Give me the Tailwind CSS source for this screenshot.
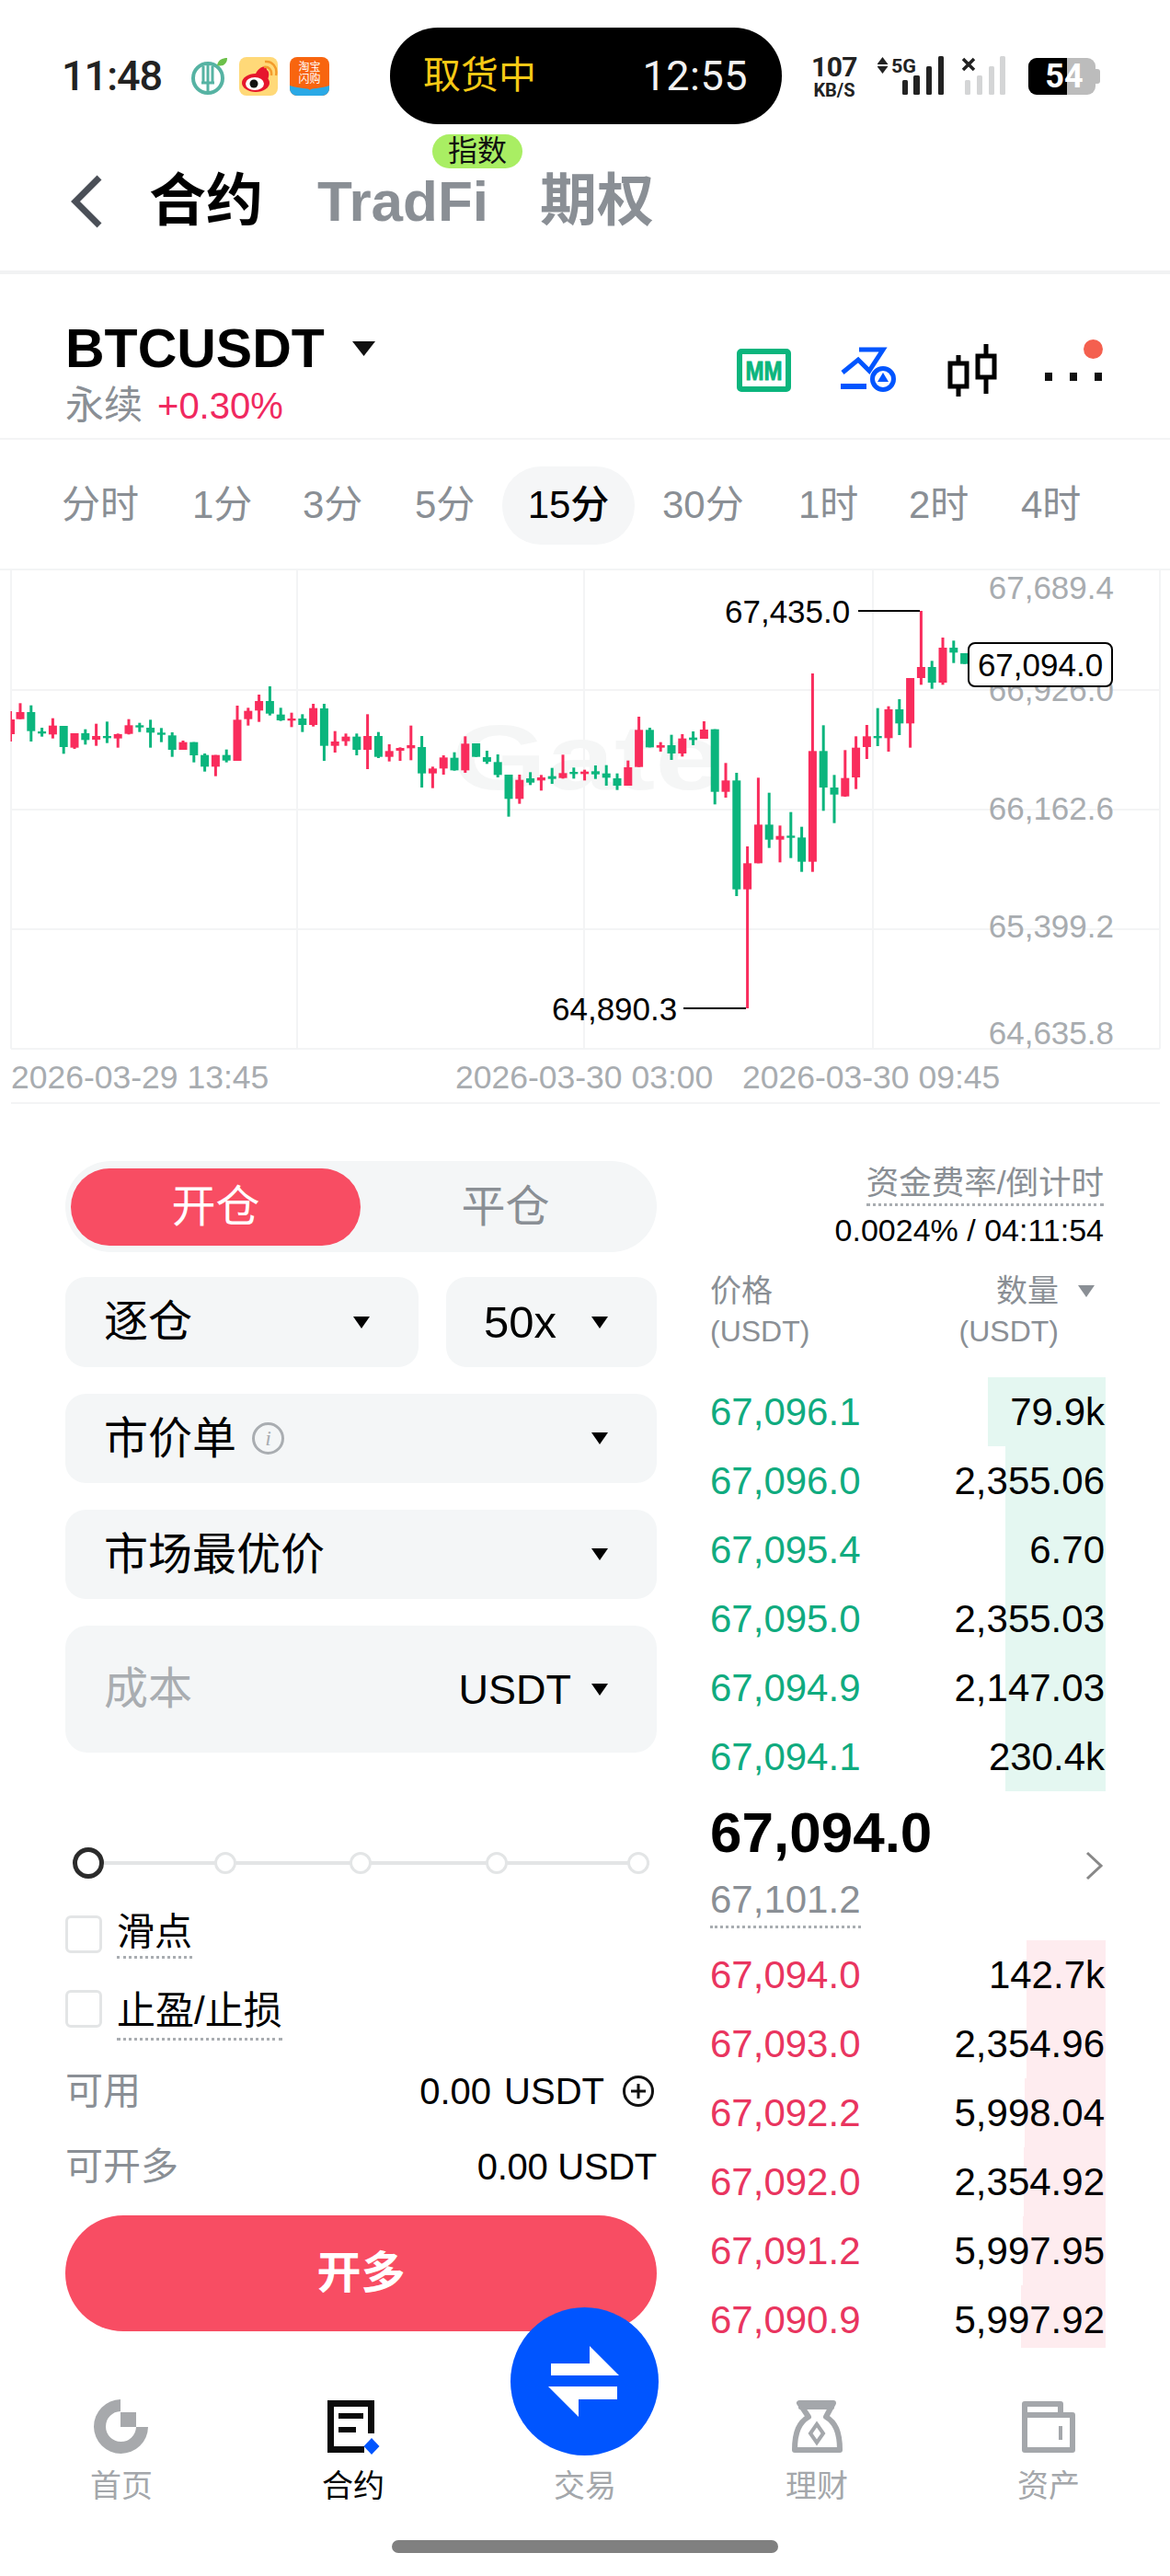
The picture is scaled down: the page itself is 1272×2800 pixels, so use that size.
<!doctype html>
<html lang="zh">
<head>
<meta charset="UTF-8" />
<meta name="viewport" content="width=device-width, initial-scale=1.0" />
<title>BTCUSDT</title>
<script src="https://cdn.jsdelivr.net/npm/@tailwindcss/browser@4"></script>
</head>
<body class="bg-white">
<div class="relative w-[1272px] h-[2800px] overflow-hidden bg-white text-black font-['Liberation_Sans','Noto_Sans_CJK_SC',sans-serif]">

	<!-- status bar -->
	<div class="flex items-center h-[105px] mt-[30px] box-border">
		<span class="ml-[67px] w-[111px] text-[45px] font-medium leading-none text-[#222] font-['Roboto',sans-serif] tracking-[-1px]">11:48</span>
		<svg class="ml-[30px] w-[40px] h-[42px]" viewBox="0 0 40 42"><circle cx="18" cy="23" r="16" fill="none" stroke="#56b3a3" stroke-width="4"/><path d="M13 10V28M23 10V28M18 7V38M11 28H25" fill="none" stroke="#56b3a3" stroke-width="3"/><path d="M28 9C29 3 34 1 39 1C39 7 35 11 28 9Z" fill="#6cc04a"/></svg>
		<svg class="ml-[12px] w-[42px] h-[42px]" viewBox="0 0 42 42"><rect width="42" height="42" rx="8" fill="#ffd978"/><ellipse cx="18" cy="28" rx="15" ry="10" fill="#e6162d"/><path d="M18 18C22 10 30 8 30 14C34 16 32 24 30 26Z" fill="#e6162d"/><ellipse cx="17" cy="29" rx="10" ry="7" fill="#fff"/><circle cx="16" cy="29" r="4.5" fill="#111"/><path d="M27 11C32 10 36 14 35 20M28 5C36 4 42 11 40 20" fill="none" stroke="#f39c2d" stroke-width="2.5"/></svg>
		<svg class="ml-[13px] w-[43px] h-[42px]" viewBox="0 0 43 42"><rect width="43" height="42" rx="8" fill="#f8650f"/><path d="M0 31C12 35 20 33 22 36C24 33 32 35 43 31V34C43 38 40 42 35 42H8C3 42 0 38 0 34Z" fill="#2aa9e6"/><text x="21.5" y="15" text-anchor="middle" font-size="12" fill="#fff">淘宝</text><text x="21.5" y="28" text-anchor="middle" font-size="12" fill="#fff">闪购</text></svg>
		<div class="ml-[66px] w-[426px] h-[105px] rounded-[52px] bg-black flex items-center justify-between pl-[36px] pr-[37px]">
			<span class="text-[41px] leading-none text-[#f6c915]">取货中</span>
			<span class="text-[45px] leading-none text-[#f2f2f2] font-['Roboto',sans-serif] tracking-[0.5px]">12:55</span>
		</div>
		<div class="ml-[31px] w-[52px] flex flex-col items-center text-[#222] font-bold">
			<span class="text-[30px] leading-[30px] tracking-[-0.5px] font-['Roboto',sans-serif] h-[30px]">107</span>
			<span class="text-[20px] leading-[20px] font-['Roboto',sans-serif] h-[20px]">KB/S</span>
		</div>
		<svg class="ml-[21px] w-[148px] h-[46px] " viewBox="956 60 148 46">
			<path d="M961 62L967 70H955ZM961 80L967 72H955Z" fill="#222" transform="translate(0.5 0) scale(1)"/>
			<text x="971" y="79" font-size="20" font-weight="700" fill="#222" textLength="27" lengthAdjust="spacingAndGlyphs" font-family="Roboto">5G</text>
			<g fill="#222"><rect x="983" y="87" width="6" height="16" rx="1.5"/><rect x="995" y="82" width="7" height="21" rx="1.5"/><rect x="1009" y="72" width="6" height="31" rx="1.5"/><rect x="1022" y="61" width="6" height="42" rx="1.5"/></g>
			<path d="M1049 64L1061 76M1061 64L1049 76" stroke="#222" stroke-width="3.5"/>
			<g fill="#d4d5d6"><rect x="1051" y="87" width="6" height="16" rx="1.5"/><rect x="1064" y="82" width="6" height="21" rx="1.5"/><rect x="1077" y="72" width="6" height="31" rx="1.5"/><rect x="1089" y="61" width="6" height="42" rx="1.5"/></g>
		</svg>
		<div class="relative ml-[16px] w-[73px] h-[40px] rounded-[9px] overflow-hidden bg-[#bcbcbc] flex items-center justify-center">
			<div class="absolute left-0 top-0 bottom-0 w-[42px] bg-black"></div>
			<span class="relative text-[36px] font-bold leading-none text-white font-['Roboto',sans-serif] ml-[5px]">54</span>
		</div>
		<div class="w-[5px] h-[16px] rounded-r-[3px] bg-[#bcbcbc]"></div>
	</div>

	<!-- top nav -->
	<div class="relative flex items-center h-[159px] pt-[9px] box-border">
		<svg class="ml-[74px] w-[42px] h-[60px]" viewBox="0 0 42 60"><path d="M34 4L8 30L34 56" fill="none" stroke="#4a4f57" stroke-width="7"/></svg>
		<span class="ml-[46px] text-[62px] font-bold leading-none">合约</span>
		<span class="ml-[59px] text-[62px] font-bold leading-none text-[#8a8f95]">TradFi</span>
		<span class="ml-[56px] text-[62px] font-bold leading-none text-[#8a8f95]">期权</span>
		<span class="absolute left-[470px] top-[11px] w-[98px] h-[37px] rounded-[19px] bg-[#a9ee63] text-[32px] leading-[37px] text-center text-[#111]">指数</span>
	</div>
	<div class="h-[4px] bg-[#f1f2f3]"></div>

	<!-- symbol row -->
	<div class="relative h-[178px] pl-[71px] pt-[52px] box-border">
		<div class="flex items-center h-[58px]">
			<span class="text-[59px] font-bold leading-none">BTCUSDT</span>
			<svg class="ml-[30px] w-[25px] h-[16px]" viewBox="0 0 25 16"><path d="M0 0H25L12.5 16Z" fill="#111"/></svg>
		</div>
		<div class="flex items-center mt-[11px] h-[44px]">
			<span class="text-[42px] leading-none text-[#8a8f95]">永续</span>
			<span class="ml-[16px] text-[40px] leading-none text-[#f0295f]">+0.30%</span>
		</div>
		<div class="absolute left-[801px] top-[81px] flex items-start">
			<svg class="w-[59px] h-[47px]" viewBox="0 0 59 47"><rect x="3" y="3" width="53" height="41" rx="2" fill="none" stroke="#0bb57d" stroke-width="6"/><text x="29.5" y="34" text-anchor="middle" font-size="30" font-weight="700" fill="#0bb57d" stroke="#0bb57d" stroke-width="1" textLength="40" lengthAdjust="spacingAndGlyphs">MM</text></svg>
			<svg class="ml-[54px] -mt-[2px] w-[60px] h-[50px]" viewBox="914 383 60 50"><path d="M916 411L933 397L945 409L960 386H934" fill="none" stroke="#0055ff" stroke-width="5"/><rect x="914" y="423" width="28" height="6" fill="#0055ff"/><circle cx="960" cy="418" r="11.5" fill="none" stroke="#0055ff" stroke-width="5"/><path d="M960 411L966 421H954Z" fill="#0055ff"/></svg>
			<svg class="ml-[55px] -mt-[5px] w-[56px] h-[58px]" viewBox="1028 379 56 58"><path d="M1041 391V436M1071 379V433" stroke="#000" stroke-width="5"/><rect x="1032" y="400" width="18" height="25" fill="#fff" stroke="#000" stroke-width="5"/><rect x="1062" y="392" width="18" height="23" fill="#fff" stroke="#000" stroke-width="5"/></svg>
		</div>
		<div class="absolute left-[1136px] top-[107px] flex gap-[19px]">
			<div class="w-[8px] h-[9px] bg-[#111]"></div><div class="w-[8px] h-[9px] bg-[#111]"></div><div class="w-[8px] h-[9px] bg-[#111]"></div>
		</div>
		<div class="absolute left-[1178px] top-[71px] w-[21px] h-[21px] rounded-full bg-[#f4604f]"></div>
	</div>
	<div class="h-[2px] bg-[#f3f4f5]"></div>

	<!-- intervals -->
	<div class="relative h-[140px] pt-[2px] box-border flex items-center text-[42px] leading-none text-[#8a8f95]">
		<span class="ml-[67px] w-[142px]">分时</span>
		<span class="w-[120px]">1分</span>
		<span class="w-[122px]">3分</span>
		<span class="w-[95px]">5分</span>
		<span class="w-[144px] h-[85px] rounded-[42px] bg-[#f5f6f7] text-black flex items-center justify-center font-medium">15分</span>
		<span class="ml-[30px] w-[148px]">30分</span>
		<span class="w-[120px]">1时</span>
		<span class="w-[122px]">2时</span>
		<span>4时</span>
	</div>
	<div class="h-[2px] bg-[#f3f4f5]"></div>

	<!-- kline chart, free canvas in page coords minus 620 -->
	<svg id="chart" class="block w-[1272px] h-[580px]" viewBox="0 0 1272 580">
		<g stroke="#f3f4f5" stroke-width="2">
			<path d="M12 0V520M323 0V520M635 0V520M949 0V520M1261 0V520"/>
			<path d="M12 130H1261M12 260H1261M12 390H1261M12 520H1261"/>
			<path d="M12 579H1261"/>
		</g>
		<text x="491" y="238" font-size="100" font-weight="700" fill="#f5f6f6" textLength="295" lengthAdjust="spacingAndGlyphs" font-family="Liberation Sans">Gate</text>
		<g id="candles"></g>
		<g text-anchor="end" font-size="35" fill="#a8acb0">
			<text x="1211" y="31">67,689.4</text>
			<text x="1211" y="142">66,926.0</text>
			<text x="1211" y="271">66,162.6</text>
			<text x="1211" y="399">65,399.2</text>
			<text x="1211" y="515">64,635.8</text>
		</g>
		<g font-size="35.5" fill="#a8acb0">
			<text x="12" y="563">2026-03-29 13:45</text>
			<text x="495" y="563">2026-03-30 03:00</text>
			<text x="807" y="563">2026-03-30 09:45</text>
		</g>
		<path d="M933 44H1000M743 476H811" stroke="#000" stroke-width="2" fill="none"/>
		<text x="788" y="57" font-size="35" fill="#000">67,435.0</text>
		<text x="600" y="489" font-size="35" fill="#000">64,890.3</text>
		<rect x="1053" y="79" width="156" height="47" rx="7" fill="#fff" stroke="#000" stroke-width="2"/>
		<text x="1131" y="115" text-anchor="middle" font-size="35" fill="#000">67,094.0</text>
	</svg>

	<!-- order form and book -->
	<div class="flex h-[1405px]">
		<div class="ml-[71px] w-[643px] pt-[62px] box-border">
			<div class="flex items-center h-[99px] rounded-[50px] bg-[#f4f6f7] pl-[6px] text-[48px] leading-none">
				<div class="w-[315px] h-[84px] rounded-[42px] bg-[#f84d63] text-white flex items-center justify-center">开仓</div>
				<div class="w-[315px] text-center text-[#8a8f95]">平仓</div>
			</div>
			<div class="flex gap-[30px] mt-[27px] text-[48px] leading-none">
				<div class="w-[384px] h-[98px] rounded-[22px] bg-[#f4f6f7] flex items-center justify-between pl-[42px] pr-[53px]">
					<span>逐仓</span>
					<svg class="w-[18px] h-[13px]" viewBox="0 0 18 13"><path d="M0 0H18L9 13Z"/></svg>
				</div>
				<div class="w-[229px] h-[98px] rounded-[22px] bg-[#f4f6f7] flex items-center justify-between pl-[41px] pr-[53px]">
					<span class="text-[49px]">50x</span>
					<svg class="w-[18px] h-[13px]" viewBox="0 0 18 13"><path d="M0 0H18L9 13Z"/></svg>
				</div>
			</div>
			<div class="flex items-center justify-between h-[97px] mt-[29px] rounded-[22px] bg-[#f4f6f7] pl-[42px] pr-[53px] text-[48px] leading-none">
				<div class="flex items-center">
					<span>市价单</span>
					<span class="ml-[17px] w-[35px] h-[35px] rounded-full border-[3px] border-[#a9adb1] text-[#a9adb1] text-[24px] italic leading-[29px] text-center font-['Liberation_Serif',serif]">i</span>
				</div>
				<svg class="w-[18px] h-[13px]" viewBox="0 0 18 13"><path d="M0 0H18L9 13Z"/></svg>
			</div>
			<div class="flex items-center justify-between h-[97px] mt-[29px] rounded-[22px] bg-[#f4f6f7] pl-[42px] pr-[53px] text-[48px] leading-none">
				<span>市场最优价</span>
				<svg class="w-[18px] h-[13px]" viewBox="0 0 18 13"><path d="M0 0H18L9 13Z"/></svg>
			</div>
			<div class="flex items-center justify-between h-[138px] mt-[29px] rounded-[24px] bg-[#f4f6f7] pl-[42px] pr-[53px] text-[48px] leading-none">
				<span class="text-[#a9adb1]">成本</span>
				<div class="flex items-center gap-[22px]">
					<span class="text-[45px]">USDT</span>
					<svg class="w-[18px] h-[13px]" viewBox="0 0 18 13"><path d="M0 0H18L9 13Z"/></svg>
				</div>
			</div>

			<div class="relative flex items-center h-[34px] mt-[103px] ml-[8px] w-[627px]">
				<div class="absolute left-0 right-0 h-[4px] bg-[#e3e5e6]"></div>
				<div class="relative w-[34px] h-[34px] rounded-full border-[5px] border-[#2b2b2b] bg-white"></div>
				<div class="relative ml-[120px] w-[24px] h-[24px] rounded-full border-[3px] border-[#e3e5e6] bg-white"></div>
				<div class="relative ml-[123px] w-[24px] h-[24px] rounded-full border-[3px] border-[#e3e5e6] bg-white"></div>
				<div class="relative ml-[124px] w-[24px] h-[24px] rounded-full border-[3px] border-[#e3e5e6] bg-white"></div>
				<div class="relative ml-[130px] w-[24px] h-[24px] rounded-full border-[3px] border-[#e3e5e6] bg-white"></div>
			</div>

			<div class="flex items-start gap-[16px] mt-[36px] text-[41px] leading-[44px]">
				<div class="w-[40px] h-[41px] mt-[4px] rounded-[6px] border-[3px] border-[#e3e5e6]"></div>
				<span class="pb-[4px] border-b-[3px] border-dotted border-[#a9adb1]">滑点</span>
			</div>
			<div class="flex items-start gap-[16px] mt-[34px] text-[42px] leading-[46px]">
				<div class="w-[40px] h-[41px] rounded-[6px] border-[3px] border-[#e3e5e6]"></div>
				<span class="pb-[6px] border-b-[3px] border-dotted border-[#a9adb1]">止盈/止损</span>
			</div>
			<div class="flex items-center justify-between mt-[33px] h-[44px] text-[40px] leading-none">
				<span class="text-[41px] text-[#8a8f95]">可用</span>
				<div class="flex items-center mr-[3px]">
					<span>0.00</span>
					<span class="ml-[14px]">USDT</span>
					<svg class="ml-[20px] w-[34px] h-[34px]" viewBox="0 0 34 34"><circle cx="17" cy="17" r="15.5" fill="none" stroke="#111" stroke-width="3"/><path d="M17 9V25M9 17H25" stroke="#111" stroke-width="3"/></svg>
				</div>
			</div>
			<div class="flex items-center justify-between mt-[38px] h-[44px] text-[40px] leading-none">
				<span class="text-[41px] text-[#8a8f95]">可开多</span>
				<span class="tracking-[-0.3px]">0.00 USDT</span>
			</div>
			<div class="flex items-center justify-center h-[126px] mt-[31px] rounded-[63px] bg-[#f84d63] text-white text-[48px] font-bold leading-none">开多</div>
		</div>

		<div class="ml-[58px] w-[430px] pt-[64px] box-border">
			<div class="flex flex-col items-end pr-[2px]">
				<span class="text-[35.5px] leading-[44px] text-[#8a8f95] border-b-[3px] border-dotted border-[#a9adb1]">资金费率/倒计时</span>
				<span class="mt-[6px] text-[34px] leading-[40px]">0.0024% / 04:11:54</span>
			</div>
			<div class="flex justify-between mt-[26px] text-[#8a8f95]">
				<div class="flex flex-col">
					<span class="text-[34px] leading-[40px]">价格</span>
					<span class="mt-[4px] text-[32px] leading-[40px]">(USDT)</span>
				</div>
				<div class="flex flex-col items-end">
					<div class="flex items-center h-[40px] pr-[12px]">
						<span class="text-[34px] leading-[40px]">数量</span>
						<svg class="ml-[21px] w-[18px] h-[13px]" viewBox="0 0 18 13"><path d="M0 0H18L9 13Z" fill="#8a8f95"/></svg>
					</div>
					<span class="mt-[4px] pr-[51px] text-[32px] leading-[40px]">(USDT)</span>
				</div>
			</div>

			<div class="mt-[30px] text-[42px] leading-none">
				<div class="relative flex items-center justify-between h-[75px]"><div class="absolute right-0 top-0 bottom-0 w-[128px] bg-[#e4f7f1]"></div><span class="relative text-[#10ab7f]">67,096.1</span><span class="relative pr-[1px]">79.9k</span></div>
				<div class="relative flex items-center justify-between h-[75px]"><div class="absolute right-0 top-0 bottom-0 w-[109px] bg-[#e4f7f1]"></div><span class="relative text-[#10ab7f]">67,096.0</span><span class="relative pr-[1px]">2,355.06</span></div>
				<div class="relative flex items-center justify-between h-[75px]"><div class="absolute right-0 top-0 bottom-0 w-[109px] bg-[#e4f7f1]"></div><span class="relative text-[#10ab7f]">67,095.4</span><span class="relative pr-[1px]">6.70</span></div>
				<div class="relative flex items-center justify-between h-[75px]"><div class="absolute right-0 top-0 bottom-0 w-[109px] bg-[#e4f7f1]"></div><span class="relative text-[#10ab7f]">67,095.0</span><span class="relative pr-[1px]">2,355.03</span></div>
				<div class="relative flex items-center justify-between h-[75px]"><div class="absolute right-0 top-0 bottom-0 w-[109px] bg-[#e4f7f1]"></div><span class="relative text-[#10ab7f]">67,094.9</span><span class="relative pr-[1px]">2,147.03</span></div>
				<div class="relative flex items-center justify-between h-[75px]"><div class="absolute right-0 top-0 bottom-0 w-[109px] bg-[#e4f7f1]"></div><span class="relative text-[#10ab7f]">67,094.1</span><span class="relative pr-[1px]">230.4k</span></div>
			</div>

			<div class="relative h-[162px]">
				<div class="pt-[14px] text-[62px] font-bold leading-[62px]">67,094.0</div>
				<div class="inline-block mt-[20px] pb-[6px] text-[42px] leading-[44px] text-[#8a8f95] border-b-[3px] border-dotted border-[#a9adb1]">67,101.2</div>
				<svg class="absolute left-[408px] top-[65px] w-[20px] h-[32px]" viewBox="0 0 20 32"><path d="M2 2L17 16L2 30" fill="none" stroke="#888" stroke-width="3"/></svg>
			</div>

			<div class="text-[42px] leading-none">
				<div class="relative flex items-center justify-between h-[75px]"><div class="absolute right-0 top-0 bottom-0 w-[86px] bg-[#feecef]"></div><span class="relative text-[#e9355f]">67,094.0</span><span class="relative pr-[1px]">142.7k</span></div>
				<div class="relative flex items-center justify-between h-[75px]"><div class="absolute right-0 top-0 bottom-0 w-[86px] bg-[#feecef]"></div><span class="relative text-[#e9355f]">67,093.0</span><span class="relative pr-[1px]">2,354.96</span></div>
				<div class="relative flex items-center justify-between h-[75px]"><div class="absolute right-0 top-0 bottom-0 w-[88px] bg-[#feecef]"></div><span class="relative text-[#e9355f]">67,092.2</span><span class="relative pr-[1px]">5,998.04</span></div>
				<div class="relative flex items-center justify-between h-[75px]"><div class="absolute right-0 top-0 bottom-0 w-[89px] bg-[#feecef]"></div><span class="relative text-[#e9355f]">67,092.0</span><span class="relative pr-[1px]">2,354.92</span></div>
				<div class="relative flex items-center justify-between h-[75px]"><div class="absolute right-0 top-0 bottom-0 w-[90px] bg-[#feecef]"></div><span class="relative text-[#e9355f]">67,091.2</span><span class="relative pr-[1px]">5,997.95</span></div>
				<div class="relative flex items-center justify-between h-[75px]"><div class="absolute right-0 top-0 bottom-[7px] w-[92px] bg-[#feecef]"></div><span class="relative text-[#e9355f]">67,090.9</span><span class="relative pr-[1px]">5,997.92</span></div>
			</div>
		</div>
	</div>

	<!-- bottom tabs -->
	<div class="grid grid-cols-[252px_252px_252px_252px_252px] pl-[6px] text-[34px] leading-[40px] text-[#a4a7ab]">
		<div class="flex flex-col items-center">
			<svg class="w-[64px] h-[64px]" viewBox="0 0 64 64"><path d="M61 33A29.5 29.5 0 1 1 31 3V16A16.5 16.5 0 1 0 48 33Z" fill="#a7a9ac"/><rect x="31" y="17" width="17" height="16" fill="#a7a9ac"/></svg>
			<span class="mt-[13px]">首页</span>
		</div>
		<div class="flex flex-col items-center text-black">
			<svg class="w-[64px] h-[64px]" viewBox="0 0 64 64"><path d="M51.5 40V7.5H7.5V57.5H44" fill="none" stroke="#0b0b0b" stroke-width="7"/><rect x="16" y="18" width="27" height="6" fill="#0b0b0b"/><rect x="16" y="33" width="19" height="6" fill="#0b0b0b"/><path d="M52 45L60.5 54L52 63L43.5 54Z" fill="#0055ff"/></svg>
			<span class="mt-[13px]">合约</span>
		</div>
		<div class="flex flex-col items-center">
			<div class="w-[64px] h-[64px]"></div>
			<span class="mt-[13px]">交易</span>
		</div>
		<div class="flex flex-col items-center">
			<svg class="w-[64px] h-[64px]" viewBox="0 0 64 64"><path d="M13 7H50L42 22C52 28 57 38 57 58H8C8 38 13 28 23 22Z" fill="none" stroke="#a4a7ab" stroke-width="6" stroke-linejoin="round"/><rect x="12" y="4" width="39" height="10" rx="2" fill="#a4a7ab"/><path d="M32 30L39 40L32 50L25 40Z" fill="none" stroke="#a4a7ab" stroke-width="4"/></svg>
			<span class="mt-[13px]">理财</span>
		</div>
		<div class="flex flex-col items-center">
			<svg class="w-[64px] h-[64px]" viewBox="0 0 64 64"><path d="M6 20V8H45V20M6 20H58V58H6Z" fill="none" stroke="#a4a7ab" stroke-width="6" stroke-linejoin="round"/><path d="M45 32V47" stroke="#a4a7ab" stroke-width="4"/></svg>
			<span class="mt-[13px]">资产</span>
		</div>
	</div>
	<div class="w-[420px] h-[14px] mx-auto mt-[39px] rounded-[7px] bg-[#808080]"></div>

	<!-- floating trade button -->
	<div class="absolute left-[555px] top-[2508px] w-[161px] h-[161px] rounded-full bg-[#0055ff] flex items-center justify-center">
		<svg class="w-[80px] h-[80px]" viewBox="596 550 80 80"><path d="M599 570H641V551L673 583H599ZM596 595H671V609H629V628Z" fill="#fff"/></svg>
	</div>
</div>

<script>
	// [wickTop, bodyTop, bodyBottom, wickBottom, up?] read off the reference, in chart coords
	const firstPart = [
		[253,282,305,305,1],[260,282,344,378,0],[333,345,352,362,0],[302,326,355,368,1],[327,327,396,418,0],
		[351,351,398,402,1],[338,351,373,388,0],[320,360,372,392,1],[313,360,367,383,0],[352,354,368,398,1],
		[305,325,353,355,1],[317,325,332,347,0],[307,333,349,398,0],[334,349,356,380,0],[348,358,405,428,0],
		[375,380,405,405,1],[380,380,423,446,0],[417,422,460,476,0],[422,422,460,491,1],[404,422,440,446,0],
		[261,307,441,441,1],[268,278,305,326,1],[225,246,277,314,1],[198,246,287,293,0],[268,290,309,311,0],
		[284,303,310,331,1],[289,303,324,347,0],[255,269,324,329,1],[255,270,392,441,0],[344,378,392,414,1],
		[352,362,377,392,1],[352,362,405,423,0],[289,360,405,468,1],[347,360,428,432,0],[387,409,428,443,1],
		[397,399,408,441,1],[326,390,400,439,1],[360,396,482,528,0],[460,466,482,530,1],[423,430,466,486,1],
		[413,431,472,473,0],[361,385,472,480,1],[384,384,428,428,0],[408,429,444,451,0],[420,445,487,495,0],
		[486,486,565,623,0],[486,503,565,581,1],[478,498,512,520,0],[487,495,505,538,1],[464,491,500,516,0],
		[421,481,497,499,1],[463,477,484,499,0],[470,476,484,505,1]
	];
	const secondPart = [
		[636,655,665,680,0],[635,662,676,702,0],[662,678,702,716,0],[620,642,702,702,1],[477,520,641,641,1],
		[513,520,577,577,0],[560,570,578,591,1],[536,570,597,618,0],[534,548,597,607,1],[525,545,553,570,0],
		[492,519,549,549,1],[518,518,722,763,0],[628,685,722,741,1],[660,685,1040,1062,0],[900,955,1040,1428,1],
		[676,829,955,955,1],[725,829,878,905,0],[832,866,878,952,1],[788,865,872,938,0],[836,871,950,983,0],
		[336,589,950,983,1],[505,589,708,784,0],[667,708,731,824,0],[586,677,737,738,1],[541,578,675,713,1],
		[504,541,576,615,1],[449,540,547,573,0],[443,453,547,591,1],[420,453,499,537,0],[351,351,499,578,1],
		[132,315,351,373,1],[295,315,366,386,0],[219,252,366,373,1],[229,252,268,302,0],[270,270,305,305,0]
	];
	const GREEN = "#0bb57d", RED = "#f92c5c";
	const group = document.getElementById("candles");

	function addRect(x, y, w, h, fill) {
		const r = document.createElementNS("http://www.w3.org/2000/svg", "rect");
		r.setAttribute("x", x);
		r.setAttribute("y", y);
		r.setAttribute("width", w);
		r.setAttribute("height", Math.max(h, 2));
		r.setAttribute("fill", fill);
		group.appendChild(r);
	}

	function addCandle(i, c, toY) {
		const x = 22 + 11.8 * i;
		const fill = c[4] ? RED : GREEN;
		addRect(x - 1.5, toY(c[0]), 3, toY(c[3]) - toY(c[0]), fill);
		addRect(x - 4.5, toY(c[1]), 9, toY(c[2]) - toY(c[1]), fill);
	}

	// the candle cut off by the left edge of the plot
	addRect(11.5, 153, 1.5, 33, RED);
	addRect(12, 162, 4, 16, RED);
	firstPart.forEach((c, i) => addCandle(i, c, (v) => 60 + v / 3));
	secondPart.forEach((c, i) => addCandle(i + firstPart.length, c, (v) => v / 3));
</script>
</body>
</html>
